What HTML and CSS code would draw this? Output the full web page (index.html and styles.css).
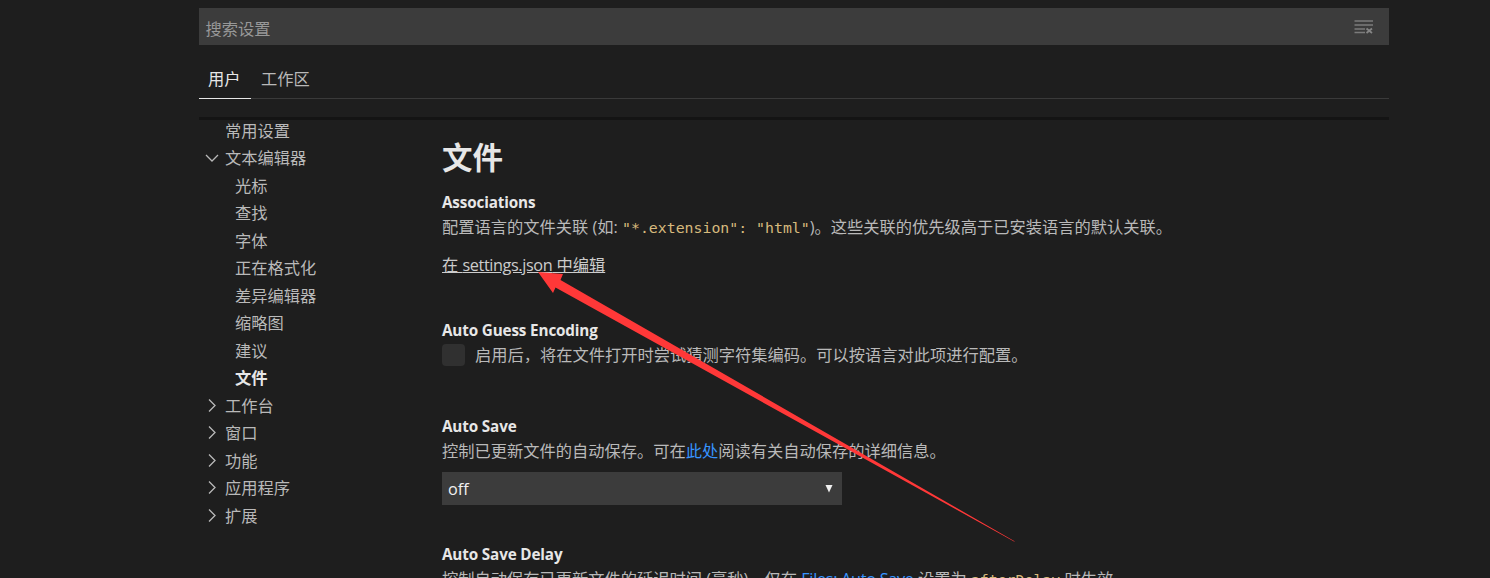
FILE: index.html
```html
<!DOCTYPE html>
<html lang="zh-CN">
<head>
  <meta charset="UTF-8">
  <meta name="viewport" content="width=device-width, initial-scale=1.0">
  <title>设置</title>
  <link rel="stylesheet" href="styles.css">
</head>
<body>
  <div class="settings-editor">
    <div class="search-box">
      <span>搜索设置</span>
      <svg class="clear-icon" width="20" height="14" viewBox="0 0 20 14">
        <path d="M0.5 1H19M0.5 5H19M0.5 9H11M0.5 12.5H11" stroke="#7b7b7b" stroke-width="1.7"/>
        <path d="M12.5 8.5L18 13M18 8.5L12.5 13" stroke="#858585" stroke-width="1.8"/>
      </svg>
    </div>
    <div class="tabs">
      <div class="tab active">用户</div>
      <div class="tab">工作区</div>
    </div>
    <div class="scroll-shadow"></div>
    <div class="settings-body">
      <ul class="toc">
        <li>常用设置</li>
        <li><svg class="arrow" viewBox="0 0 14 14"><path d="M1 4L7 10L13 4"/></svg>文本编辑器</li>
        <li class="child">光标</li>
        <li class="child">查找</li>
        <li class="child">字体</li>
        <li class="child">正在格式化</li>
        <li class="child">差异编辑器</li>
        <li class="child">缩略图</li>
        <li class="child">建议</li>
        <li class="child selected">文件</li>
        <li><svg class="arrow" viewBox="0 0 14 14"><path d="M4 0.5L10 6.5L4 12.5"/></svg>工作台</li>
        <li><svg class="arrow" viewBox="0 0 14 14"><path d="M4 0.5L10 6.5L4 12.5"/></svg>窗口</li>
        <li><svg class="arrow" viewBox="0 0 14 14"><path d="M4 0.5L10 6.5L4 12.5"/></svg>功能</li>
        <li><svg class="arrow" viewBox="0 0 14 14"><path d="M4 0.5L10 6.5L4 12.5"/></svg>应用程序</li>
        <li><svg class="arrow" viewBox="0 0 14 14"><path d="M4 0.5L10 6.5L4 12.5"/></svg>扩展</li>
      </ul>
      <div class="settings-list">
        <h1>文件</h1>
        <div class="setting associations">
          <h2>Associations</h2>
          <p>配置语言的文件关联 (如: <code>"*.extension": "html"</code>)。这些关联的优先级高于已安装语言的默认关联。</p>
          <a class="edit-json" href="#">在 <span class="latin">settings.json</span> 中编辑</a>
        </div>
        <div class="setting guess-encoding">
          <h2>Auto Guess Encoding</h2>
          <div class="check-row">
            <span class="checkbox"></span>
            <p>启用后，将在文件打开时尝试猜测字符集编码。可以按语言对此项进行配置。</p>
          </div>
        </div>
        <div class="setting auto-save">
          <h2>Auto Save</h2>
          <p>控制已更新文件的自动保存。可在<a href="#">此处</a>阅读有关自动保存的详细信息。</p>
          <div class="select-box">
            <span>off</span>
            <svg width="8" height="8" viewBox="0 0 8 8"><path d="M0.5 0H7.500L4 7.500Z" fill="#f0f0f0"/></svg>
          </div>
        </div>
        <div class="setting">
          <h2>Auto Save Delay</h2>
          <p>控制自动保存已更新文件的延迟时间 (毫秒)。仅在 <a class="latin-link" href="#">Files: Auto Save</a> 设置为 <code>afterDelay</code> 时生效。</p>
        </div>
      </div>
    </div>
  </div>
  <!-- red pointer over the page -->
  <svg class="pointer" width="480" height="272" viewBox="0 0 480 272">
    <path d="M0 0L25 2L22.500 8L477 269.500L476 269.500L17.500 15.500L15 21Z" fill="#ff3838"/>
  </svg>
</body>
</html>
```

FILE: styles.css
```css
* {
  box-sizing: border-box;
}
body {
  margin: 0;
  height: 578px;
  overflow: hidden;
  position: relative;
  background-color: #1e1e1e;
  color: #b9b9b9;
  font-family: "Open Sans", "Noto Sans CJK SC", sans-serif;
  font-size: 16.25px;
  line-height: 24px;
}
h1, h2, p, ul {
  margin: 0;
  padding: 0;
}
.settings-editor {
  width: 1190px;
  margin-left: 199px;
  padding-top: 8px;
}
.search-box {
  display: flex;
  justify-content: space-between;
  align-items: center;
  height: 37px;
  padding: 4px 15px 0 6.5px;
  background-color: #3c3c3c;
  color: #989898;
}
.clear-icon {
  margin-top: -4px;
}
.tabs {
  display: flex;
  height: 54px;
  border-bottom: 1px solid #3a3a3a;
}
.tab {
  height: 54px;
  padding: 22px 10px 0 10px;
}
.tab.active {
  width: 52px;
  padding-left: 9px;
  color: #e7e7e7;
  border-bottom: 1px solid #e7e7e7;
}
.scroll-shadow {
  height: 3px;
  margin-top: 18px;
  background-color: #141414;
}
.settings-body {
  display: flex;
}
.toc {
  width: 243px;
  list-style: none;
  margin-top: -2.3px;
}
.toc li {
  position: relative;
  height: 27.5px;
  line-height: 27.5px;
  padding-left: 26px;
}
.toc .child {
  padding-left: 36px;
}
.toc .selected {
  color: #e7e7e7;
  font-weight: bold;
}
.arrow {
  position: absolute;
  left: 6px;
  top: 6px;
  width: 14px;
  height: 14px;
  fill: none;
  stroke: #b9b9b9;
  stroke-width: 1.3;
}
.settings-list {
  flex: 1;
  white-space: nowrap;
}
h1 {
  height: 70px;
  padding-top: 17px;
  font-size: 30.5px;
  line-height: 40px;
  color: #e7e7e7;
}
h2 {
  height: 25px;
  font-size: 15.25px;
  font-weight: 700;
  letter-spacing: -0.15px;
  color: #e7e7e7;
}
a {
  color: #3794ff;
  text-decoration: none;
}
code {
  font-family: "DejaVu Sans Mono", monospace;
  font-size: 14.85px;
  line-height: 1;
  color: #d7ba7d;
}
.latin {
  letter-spacing: -0.4px;
}
.latin-link {
  letter-spacing: -0.3px;
}
.associations {
  height: 128px;
}
.edit-json {
  display: inline-block;
  margin-top: 14px;
  color: #cccccc;
  text-decoration: underline;
}
.guess-encoding {
  height: 96px;
}
.check-row {
  display: flex;
  gap: 10px;
}
.checkbox {
  width: 23px;
  height: 22px;
  margin-top: 1px;
  border-radius: 4px;
  background-color: #303030;
}
.auto-save {
  height: 128px;
}
.select-box {
  display: flex;
  justify-content: space-between;
  align-items: center;
  width: 400px;
  height: 33px;
  margin-top: 9px;
  padding: 0 9px 0 6px;
  background-color: #3c3c3c;
  color: #f0f0f0;
}
.pointer {
  position: absolute;
  left: 538px;
  top: 272px;
}
```
